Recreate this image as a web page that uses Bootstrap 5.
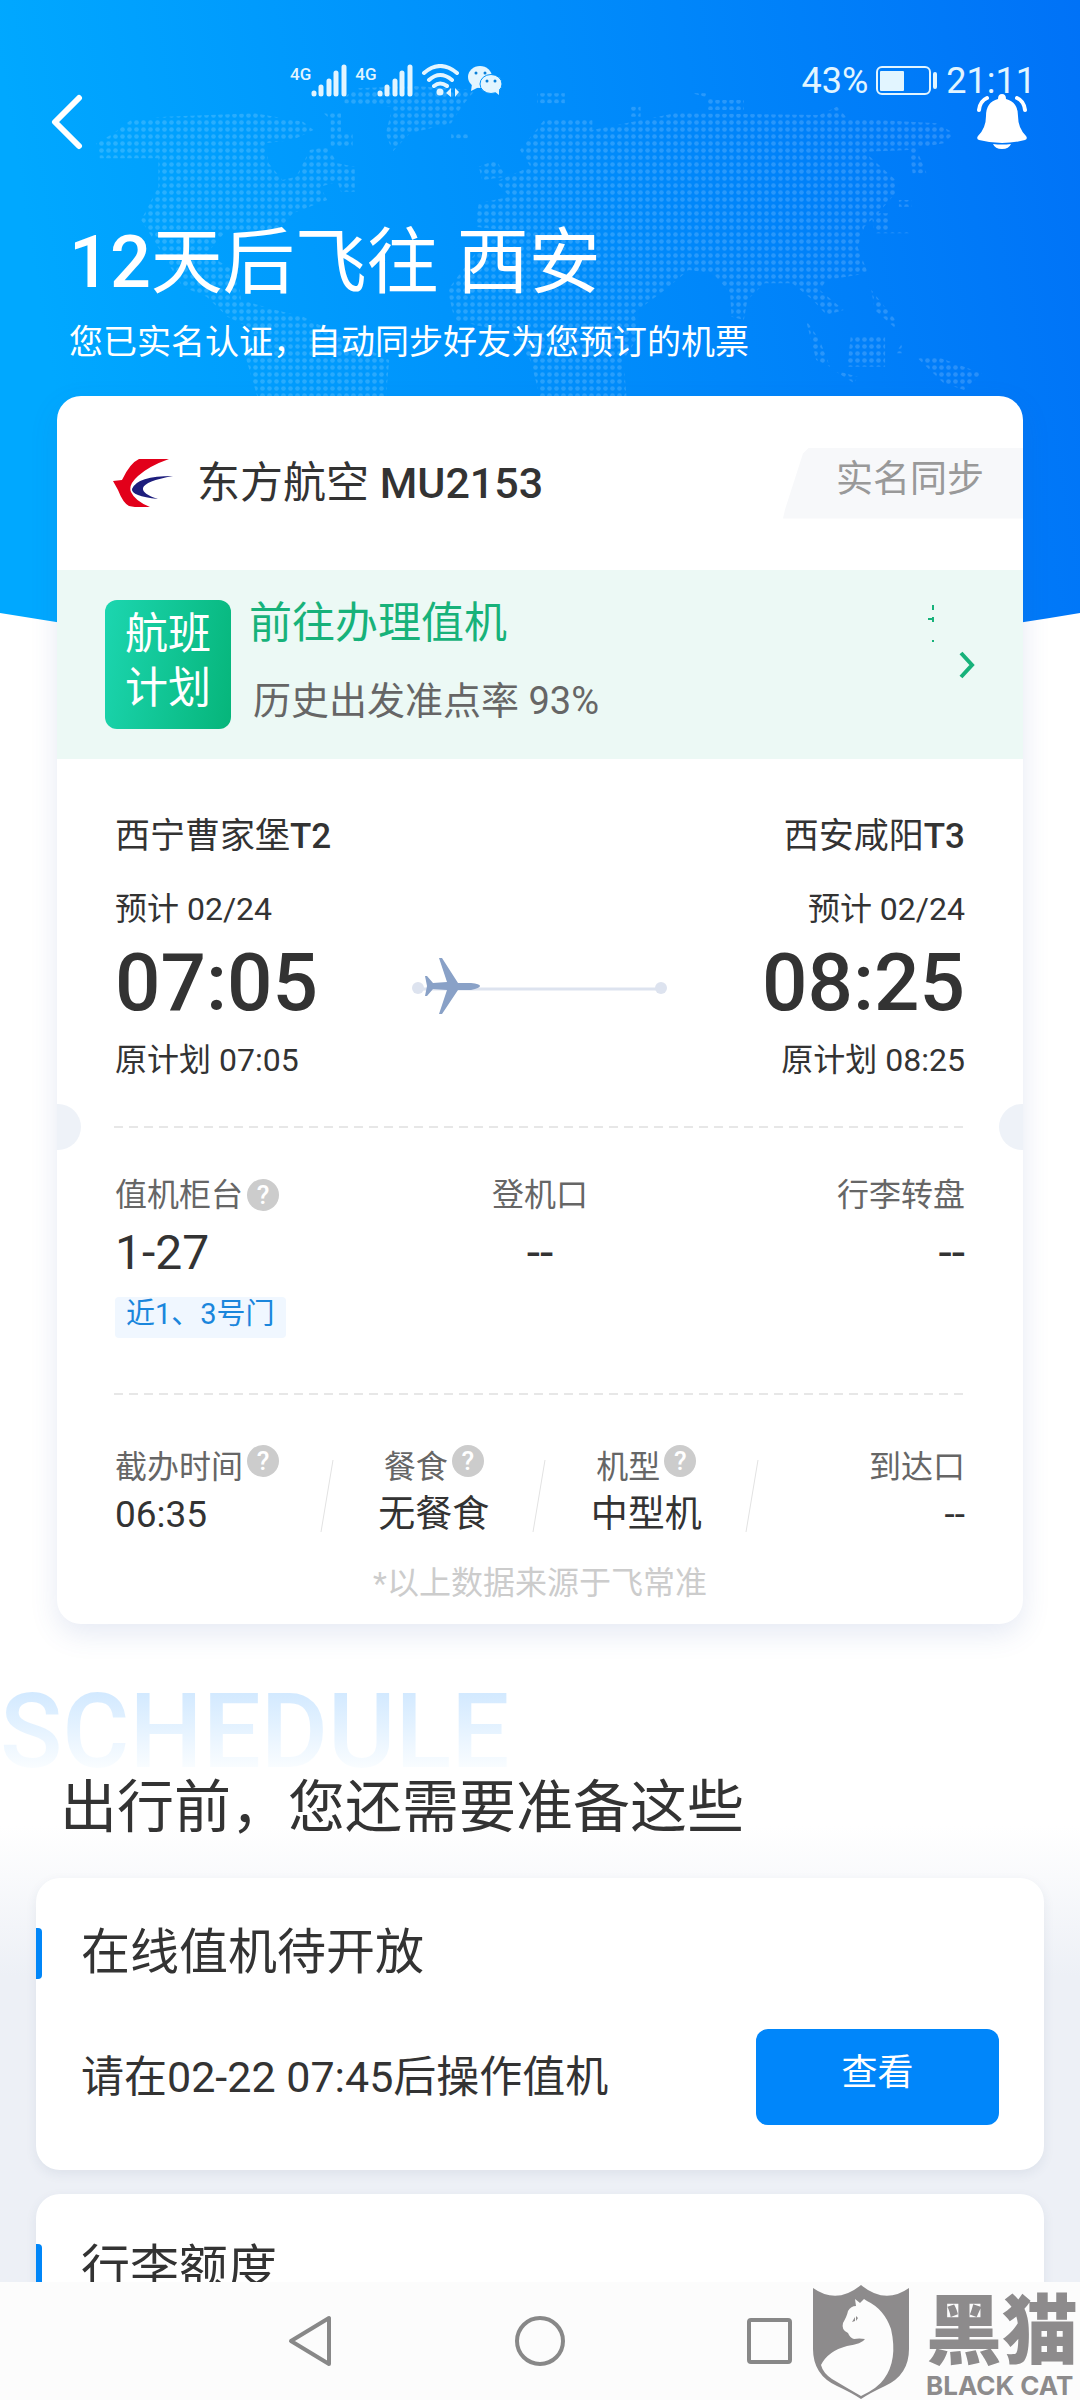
<!DOCTYPE html>
<html lang="zh-CN">
<head>
<meta charset="utf-8">
<meta name="viewport" content="width=device-width, initial-scale=1">
<title>航班行程</title>
<link rel="stylesheet" href="https://cdn.jsdelivr.net/npm/bootstrap@5.3.0/dist/css/bootstrap.min.css">
<style>
body{font-family:Roboto,"Noto Sans CJK SC",sans-serif;color:#333;background:#fff}
a{color:inherit;text-decoration:none}
h1,h2,h3,p{margin:0;font-weight:400}
button{border:0;padding:0;background:none;color:inherit}
svg{display:block;flex:none}
.sky{position:absolute;top:0;left:0;width:100%;height:664px;z-index:0}
.sky-map{position:absolute;top:0;left:0;z-index:0}
.over{position:relative;z-index:1}
.status{padding:60px 44px 0 290px;height:94px;color:#e2f5ff}
.net-tag{font-size:17px;line-height:20px;font-weight:500}
.clock{font-size:36px;line-height:42px}
.top-nav{padding:0 52px 0 50px}
.hero{padding:69px 69px 0;color:#fff}
.hero h1{font-size:72px;line-height:88px}
.hero p{font-size:34px;line-height:44px;margin-top:13px}
.fw-md{font-weight:500}
.ticket{margin:32px 57px 0;border-radius:24px;background:#fff;box-shadow:0 10px 28px rgba(60,90,170,.13)}
.ticket-head{height:174px;padding-left:56px}
.t43{font-size:43px;line-height:54px}
.t38{font-size:38px;line-height:44px}
.t37{font-size:37px;line-height:44px}
.t35{font-size:35px;line-height:48px}
.t32{font-size:32px;line-height:44px}
.t29{font-size:29px;line-height:34px}
.t80{font-size:80px;line-height:88px}
.t48{font-size:48px;line-height:56px}
.muted{color:#666}
.sync-tag{height:71px;padding:10px 39px 0 53px;color:#999;background:#f7f8fa;clip-path:polygon(26px 0,100% 0,100% 100%,0 100%,2px 62px,20px 6px)}
.plan{height:189px;background:#ecf9f5;padding:0 47px 0 48px}
.plan-badge{width:126px;height:129px;border-radius:12px;color:#fff;padding-top:7px;background:linear-gradient(100deg,#1cd6b0,#06b57a);flex:none}
.plan-text{padding:0 0 10px 18px}
.plan-rate{margin-top:29px;padding-left:4px}
.green{color:#17b27a}
.legs{padding:54px 58px 44px}
.leg{flex:1}
.leg-day{margin:26px 0 8px}
.leg-orig{margin-top:11px}
.leg-line{align-self:flex-end;margin-bottom:66px}
.cut{position:relative;height:2px}
.dashes{height:2px;margin:0 57px;background:repeating-linear-gradient(90deg,#e7e7e7 0 9px,transparent 9px 15px)}
.notch{position:absolute;top:-22px;width:24px;height:46px;background:#eef2f8}
.notch-l{left:0;border-radius:0 24px 24px 0}
.notch-r{right:0;border-radius:24px 0 0 24px}
.facts{padding:45px 58px 55px}
.gates{background:#f0f7ff;color:#1a86dc;height:41px;padding:0 11px;border-radius:4px;margin-top:16px;display:inline-block}
.help{width:32px;height:32px;border-radius:50%;background:#ccc;color:#fff;font-size:26px;line-height:32px;font-weight:500;flex:none}
.more{padding:50px 58px 0}
.slash{position:absolute;right:-6px;top:15px}
.note{color:#ccc;margin-top:24px;padding-bottom:19px}
.ghost{font-size:103px;line-height:88px;font-weight:500;background:linear-gradient(#d2e9ff 5%,#fafdff 92%);-webkit-background-clip:text;background-clip:text;color:transparent;margin-top:64px}
.prep{background:linear-gradient(#fff 50px,#edf0f6 200px)}
.prep h2{font-size:57px;line-height:64px;padding-left:60px}
.prep-list{padding-top:38px}
.todo{position:relative;margin:0 36px 24px;padding:45px;border-radius:24px;background:#fff;box-shadow:0 4px 12px rgba(40,60,100,.08)}
.todo h3{font-size:49px;line-height:60px}
.todo::before{content:"";position:absolute;left:0;top:50px;width:6px;height:51px;background:#0086f8;border-radius:0 4px 4px 0}
.todo-row{margin-top:46px}
.btn-look{background:#0086fa;color:#fff;width:243px;height:96px;border-radius:12px;font-size:36px;line-height:44px;padding-bottom:8px}
.sysbar{height:118px;background:#fcfcfc;position:relative}
.sys-keys{gap:180px}
.mark-cat{position:absolute;right:2px;top:3px;color:#8d8b8c}
.cat-cn{font-size:76px;line-height:80px;font-weight:900;font-family:"Noto Sans CJK SC",sans-serif}
.cat-en{font-size:26px;line-height:26px;margin-top:8px;font-weight:700;font-family:Inter,sans-serif}
</style>
<script src="https://cdn.jsdelivr.net/npm/bootstrap@5.3.0/dist/js/bootstrap.bundle.min.js"></script>
</head>
<body>
<div class="vh-100 d-flex flex-column overflow-hidden">
<main class="flex-grow-1 overflow-hidden position-relative">
  <svg class="sky" viewBox="0 0 1080 664" preserveAspectRatio="none" aria-hidden="true">
    <defs><linearGradient id="g" x1="0" y1=".1" x2="1" y2="0"><stop offset="0" stop-color="#00a8ff"/><stop offset=".5" stop-color="#008dfb"/><stop offset="1" stop-color="#0072f7"/></linearGradient></defs>
    <path d="M0 0H1080V613Q540 705 0 613Z" fill="url(#g)"/>
  </svg>
  <!-- dotted world map -->
  <svg class="sky-map" width="1080" height="400" aria-hidden="true">
    <defs>
      <pattern id="d" width="7" height="7" patternUnits="userSpaceOnUse"><circle cx="3.500" cy="3.500" r="2.300" fill="#fff" fill-opacity=".16"/></pattern>
      <clipPath id="w"><path transform="scale(.6888 .3333)" d="M145 475L140 430 165 400 190 360 240 350 370 340 440 365 455 390 425 420 385 430 390 490 410 540 430 530 450 450 475 440 490 490 515 500 515 575 495 575 490 545 465 560 475 600 425 640 405 690 330 690 300 760 345 820 350 900 400 930 440 950 565 1080 560 1200 375 1200 355 1060 370 990 330 950 300 890 265 860 235 760 205 660 230 560 230 475ZM500 290L520 265 600 258 690 270 670 320 655 370 595 400 570 455 560 400 570 320 500 310ZM470 340H495V400H512V440H480V360ZM655 400H680V415H655ZM780 280H820V310H780ZM915 320H930V350H915ZM1005 280H1025V330H1080V300H1040ZM695 500L720 480 735 530 700 540ZM790 360H860V390L980 340 1190 345 1215 320 1230 355 1360 370 1385 400 1370 430 1330 445 1345 520 1325 520 1320 450 1255 455 1300 540 1300 580 1275 640 1255 680 1245 740 1260 820 1200 840 1190 870 1225 930 1200 945 1180 900 1150 850 1110 850 1085 900 1080 960 1062 950 1060 880 1035 820 1000 810 965 870 920 940 930 1000 905 1080 910 1200 785 1200 770 1080 740 1000 660 960 650 870 690 760 730 690 690 680 695 610 740 590 720 545 770 500 755 450ZM1265 640H1290V690H1320V700H1270ZM1305 600H1323V620H1305ZM1265 870L1300 960 1300 985 1270 930ZM1170 960L1190 1020 1205 1100 1185 1080ZM1235 1010H1285V1100H1230ZM1310 1030V1060H1300ZM1330 1070L1360 1070 1425 1120 1400 1170 1370 1150ZM1210 1110L1245 1130 1240 1150Z"/></clipPath>
    </defs>
    <rect width="1080" height="400" fill="url(#d)" clip-path="url(#w)"/>
  </svg>

  <div class="over">
    <div class="status d-flex justify-content-between align-items-start">
      <div class="d-flex align-items-start pt-1">
        <span class="net-tag">4G</span>
        <svg class="me-1" width="40" height="34" fill="none" stroke="currentColor" stroke-width="5" stroke-linecap="round"><path d="M3 29V30M10 23V30M18 17V30M25 9V30M33 3V30"/></svg>
        <span class="net-tag">4G</span>
        <svg width="40" height="34" fill="none" stroke="currentColor" stroke-width="5" stroke-linecap="round"><path d="M3 29V30M10 23V30M18 17V30M25 9V30M33 3V30"/></svg>
        <svg class="ms-1" width="42" height="34" fill="none" stroke="currentColor" stroke-width="4" stroke-linecap="round"><path d="M3 9Q19-5 36 9M8 16Q19 6 31 16M13 22Q19 17 26 22"/><circle cx="19" cy="28" r="3.500" fill="currentColor" stroke="none"/><path d="M25 29L30 24V33M34 33V24L38 28Z" stroke="none" fill="currentColor"/></svg>
        <svg class="ms-1" width="36" height="34"><g fill="currentColor"><ellipse cx="13" cy="13" rx="12" ry="11"/><path d="M5 20L4 27 12 23Z"/><ellipse cx="24" cy="20" rx="11" ry="9.500" stroke="#0092fb"/><path d="M27 27L32 31 32 24Z"/></g><g fill="#0a7fd8"><circle cx="9" cy="9" r="1.500"/><circle cx="18" cy="9" r="1.500"/><circle cx="20" cy="17" r="1.500"/><circle cx="28" cy="17" r="1.500"/></g></svg>
      </div>
      <div class="d-flex align-items-center clock">
        <span>43%</span>
        <svg class="ms-2 me-1" width="66" height="30"><rect x="1" y="1" width="53" height="27" rx="5" fill="none" stroke="currentColor" stroke-width="2"/><rect x="4" y="5" width="24" height="20" rx="1" fill="currentColor"/><rect x="57" y="6" width="4" height="17" rx="2" fill="currentColor"/></svg>
        <span>21:11</span>
      </div>
    </div>
    <nav class="top-nav d-flex justify-content-between text-white">
      <a href="#" aria-label="返回"><svg width="34" height="56" fill="none" stroke="#fff" stroke-width="6" stroke-linecap="round" stroke-linejoin="round"><path d="M29 4L5 28 29 52"/></svg></a>
      <button aria-label="通知"><svg width="52" height="56"><g fill="#fff"><path d="M22 5Q22 0 26 0T30 5Q42 8 42 22Q42 34 50 42Q52 45 49 46Q26 52 3 46Q0 45 2 42Q10 34 10 22Q10 8 22 5Z"/><path d="M17 50Q26 51 35 50Q33 55 26 55T17 50Z"/></g><path d="M11 4Q4 7 3 16M41 4Q48 7 49 16" fill="none" stroke="#fff" stroke-width="4" stroke-linecap="round"/></svg></button>
    </nav>
    <header class="hero">
      <h1><span class="fw-md">12</span>天后飞往 西安</h1>
      <p>您已实名认证，自动同步好友为您预订的机票</p>
    </header>

    <section class="ticket">
      <div class="ticket-head d-flex align-items-center justify-content-between">
        <div class="d-flex align-items-center">
          <svg width="60" height="48" viewBox="0 0 60 48"><path d="M26 0H56Q36 7 25 17Q15 26 18 33Q22 42 37 48Q24 49 16 47Q10 44 5 31L0 22 9 21Q17 4 26 0Z" fill="#e2001a"/><path d="M60 17Q24 17 19 30Q18 37 45 40Q29 35 30 29Q32 22 60 17Z" fill="#1d1d7c"/></svg>
          <h2 class="t43 ms-4">东方航空 <span class="fw-md">MU2153</span></h2>
        </div>
        <div class="sync-tag t37">实名同步</div>
      </div>
      <a href="#" class="plan d-flex align-items-center">
        <div class="plan-badge t43 text-center">航班<br>计划</div>
        <div class="plan-text flex-grow-1">
          <div class="t43 green">前往办理值机</div>
          <div class="plan-rate t38 muted">历史出发准点率 93%</div>
        </div>
        <svg width="50" height="124" fill="none" stroke="#17b27a"><path d="M35 50L46 62 35 74" stroke-width="4"/><path d="M7 2V7M2 16H8M7 14V19M7 37V39" stroke-width="2"/></svg>
      </a>
      <div class="legs d-flex">
        <div class="leg">
          <div class="t35">西宁曹家堡<span class="fw-md">T2</span></div>
          <div class="t32 leg-day">预计 02/24</div>
          <div class="t80 fw-md">07:05</div>
          <div class="t32 leg-orig">原计划 07:05</div>
        </div>
        <svg class="leg-line" width="258" height="60"><path d="M9 33H250" stroke="#dde3ef" stroke-width="3"/><circle cx="7" cy="32" r="6" fill="#dde3ef"/><circle cx="250" cy="32" r="6" fill="#dde3ef"/><path d="M28 2H31L47 27H60Q69 28 69 30T60 34H47L31 58H28L36 34L22 33 16 40H14L16 30 14 20H16L22 27 36 26Z" fill="#89a1c7"/></svg>
        <div class="leg text-end">
          <div class="t35">西安咸阳<span class="fw-md">T3</span></div>
          <div class="t32 leg-day">预计 02/24</div>
          <div class="t80 fw-md">08:25</div>
          <div class="t32 leg-orig">原计划 08:25</div>
        </div>
      </div>
      <div class="cut"><span class="notch notch-l"></span><span class="notch notch-r"></span><div class="dashes"></div></div>
      <div class="facts row gx-0">
        <div class="col-4">
          <div class="t32 muted d-flex align-items-center">值机柜台<button class="help ms-1" aria-label="值机柜台说明">?</button></div>
          <div class="t48 mt-2">1-27</div>
          <div class="gates t29">近1、3号门</div>
        </div>
        <div class="col-4 text-center"><div class="t32 muted">登机口</div><div class="t48 mt-2">--</div></div>
        <div class="col-4 text-end"><div class="t32 muted">行李转盘</div><div class="t48 mt-2">--</div></div>
      </div>
      <div class="dashes"></div>
      <div class="more row gx-0">
        <div class="col-3 position-relative">
          <div class="t32 muted d-flex">截办时间<button class="help ms-1" aria-label="截办时间说明">?</button></div>
          <div class="t37 mt-1">06:35</div>
          <svg class="slash" width="14" height="72" stroke="#e2e2e2"><path d="M13 0L1 72"/></svg>
        </div>
        <div class="col-3 position-relative text-center">
          <div class="t32 muted d-flex justify-content-center">餐食<button class="help ms-1" aria-label="餐食说明">?</button></div>
          <div class="t37 mt-1">无餐食</div>
          <svg class="slash" width="14" height="72" stroke="#e2e2e2"><path d="M13 0L1 72"/></svg>
        </div>
        <div class="col-3 position-relative text-center">
          <div class="t32 muted d-flex justify-content-center">机型<button class="help ms-1" aria-label="机型说明">?</button></div>
          <div class="t37 mt-1">中型机</div>
          <svg class="slash" width="14" height="72" stroke="#e2e2e2"><path d="M13 0L1 72"/></svg>
        </div>
        <div class="col-3 text-end"><div class="t32 muted">到达口</div><div class="t37 mt-1">--</div></div>
      </div>
      <p class="note t32 text-center">*以上数据来源于飞常准</p>
    </section>

    <div class="ghost" aria-hidden="true">SCHEDULE</div>
    <section class="prep">
      <h2>出行前，您还需要准备这些</h2>
      <div class="prep-list">
        <article class="todo">
          <h3>在线值机待开放</h3>
          <div class="d-flex justify-content-between align-items-center todo-row">
            <p class="t43">请在02-22 07:45后操作值机</p>
            <button class="btn-look">查看</button>
          </div>
        </article>
        <article class="todo"><h3>行李额度</h3></article>
      </div>
    </section>
  </div>
</main>
<footer class="sysbar flex-shrink-0">
  <nav class="d-flex justify-content-center h-100 align-items-center sys-keys">
    <button aria-label="后退"><svg width="48" height="56" fill="none" stroke="#888" stroke-width="4" stroke-linejoin="round"><path d="M43 5V51L5 28Z"/></svg></button>
    <button aria-label="主页"><svg width="52" height="52" fill="none" stroke="#888" stroke-width="4"><circle cx="26" cy="26" r="23"/></svg></button>
    <button aria-label="最近任务"><svg width="48" height="48" fill="none" stroke="#888" stroke-width="4"><rect x="3" y="3" width="41" height="42" rx="2"/></svg></button>
  </nav>
  <div class="mark-cat d-flex">
    <svg width="98" height="115" viewBox="0 0 98 115"><path d="M1 3Q25 20 49 0Q73 20 97 3V64Q97 90 73 101Q58 108 49 114Q40 108 25 101Q1 90 1 64Z" fill="#8d8b8c"/><path d="M43 14L48 18 52 14 55 16Q72 24 79 44Q86 75 72 94Q66 103 49 111Q35 103 20 94Q11 88 9 80Q16 66 35 61Q50 59 53 54Q47 53 42 54 38 53 36 48Q29 45 31 38Q35 31 36 26Q39 21 44 21Z" fill="#fcfcfc"/><path d="M40 37L43 32V36ZM44 31L46 33 44 36Z" fill="#8d8b8c"/></svg>
    <div class="ms-3"><div class="cat-cn">黑猫</div><div class="cat-en">BLACK CAT</div></div>
  </div>
</footer>
</div>
</body>
</html>
